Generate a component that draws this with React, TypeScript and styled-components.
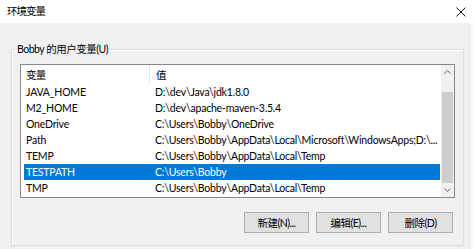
import React from 'react'
import styled, { createGlobalStyle } from 'styled-components'

const GlobalStyle = createGlobalStyle`
  html, body {
    margin: 0;
    padding: 0;
    width: 474px;
    height: 249px;
    overflow: hidden;
    background: #ffffff;
  }
  body {
    font-family: Lato, "Noto Sans CJK SC", sans-serif;
    font-size: 10.5px;
    color: #000000;
  }
`

type Variable = {
  name: string
  value: string
  selected?: boolean
}

const variables: Variable[] = [
  { name: 'JAVA_HOME', value: 'D:\\dev\\Java\\jdk1.8.0' },
  { name: 'M2_HOME', value: 'D:\\dev\\apache-maven-3.5.4' },
  { name: 'OneDrive', value: 'C:\\Users\\Bobby\\OneDrive' },
  {
    name: 'Path',
    value: 'C:\\Users\\Bobby\\AppData\\Local\\Microsoft\\WindowsApps;D:\\...',
  },
  { name: 'TEMP', value: 'C:\\Users\\Bobby\\AppData\\Local\\Temp' },
  { name: 'TESTPATH', value: 'C:\\Users\\Bobby', selected: true },
  { name: 'TMP', value: 'C:\\Users\\Bobby\\AppData\\Local\\Temp' },
]

export default function App() {
  return (
    <>
      <GlobalStyle />
      <Window>
        <TitleBar>
          <Title>环境变量</Title>
          <CloseButton aria-label="关闭">
            <svg width="10" height="10" viewBox="0 0 10 10">
              <path d="M0.5 0.5 L9.5 9.5 M9.5 0.5 L0.5 9.5" stroke="#1a1a1a" strokeWidth="1" />
            </svg>
          </CloseButton>
        </TitleBar>
        <Body>
          <GroupBox>
            <Legend>Bobby 的用户变量(U)</Legend>
            <ListView>
              <Rows>
                <HeaderRow>
                  <HeaderCell>变量</HeaderCell>
                  <HeaderCell $divider>值</HeaderCell>
                </HeaderRow>
                {variables.map((v) => (
                  <Row key={v.name} $selected={v.selected}>
                    <NameCell>{v.name}</NameCell>
                    <ValueCell>{v.value}</ValueCell>
                  </Row>
                ))}
              </Rows>
              <ScrollBar>
                <ScrollArrow>
                  <svg width="7" height="4" viewBox="0 0 7 4">
                    <path d="M0.5 3.5 L3.5 0.5 L6.5 3.5" stroke="#606060" fill="none" />
                  </svg>
                </ScrollArrow>
                <Track>
                  <Thumb />
                </Track>
                <ScrollArrow>
                  <svg width="7" height="4" viewBox="0 0 7 4">
                    <path d="M0.5 0.5 L3.5 3.5 L6.5 0.5" stroke="#606060" fill="none" />
                  </svg>
                </ScrollArrow>
              </ScrollBar>
            </ListView>
            <ButtonRow>
              <Button>新建(N)...</Button>
              <Button>编辑(E)...</Button>
              <Button>删除(D)</Button>
            </ButtonRow>
          </GroupBox>
        </Body>
      </Window>
    </>
  )
}

const Window = styled.div`
  width: 474px;
  height: 249px;
  display: flex;
  flex-direction: column;
`

const TitleBar = styled.div`
  height: 23px;
  flex: none;
  display: flex;
  align-items: center;
  justify-content: space-between;
  padding: 0 6px 0 7px;
  background: #ffffff;
`

const Title = styled.span`
  line-height: 16px;
  margin-top: -1px;
  letter-spacing: -1px;
`

const CloseButton = styled.div`
  display: flex;
  align-items: center;
  justify-content: center;
  width: 14px;
  height: 14px;
  margin-top: 1px;
`

const Body = styled.div`
  flex: 1;
  background: #f0f0f0;
  border-right: 3px solid #fafafa;
  padding: 18px 7px 0 11px;
`

const GroupBox = styled.fieldset`
  margin: 0;
  padding: 0 8px 12px 8px;
  border: 1px solid #dcdcdc;
  box-shadow: inset 1px 1px 0 #ffffff;
  min-width: 0;
`

const Legend = styled.legend`
  margin-left: -5px;
  padding: 0 2px;
  line-height: 16px;
  letter-spacing: -0.5px;
`

const ListView = styled.div`
  margin-top: 7px;
  height: 134px;
  box-sizing: border-box;
  border: 1px solid #828790;
  background: #ffffff;
  display: flex;
`

const Rows = styled.div`
  flex: 1;
  min-width: 0;
  padding: 0 1px 0 3px;
`

const HeaderRow = styled.div`
  height: 19px;
  display: grid;
  grid-template-columns: 125px 1fr;
  align-items: stretch;
  letter-spacing: -0.8px;
`

const HeaderCell = styled.div<{ $divider?: boolean }>`
  display: flex;
  align-items: center;
  padding-left: ${({ $divider }) => ($divider ? 6 : 2)}px;
  border-left: ${({ $divider }) => ($divider ? '1px solid #e5e5e5' : 'none')};
  line-height: 16px;
`

const Row = styled.div<{ $selected?: boolean }>`
  height: 16px;
  display: grid;
  grid-template-columns: 125px 1fr;
  align-items: center;
  line-height: 16px;
  white-space: nowrap;
  letter-spacing: -0.2px;
  background: ${({ $selected }) => ($selected ? '#0078d7' : 'transparent')};
  color: ${({ $selected }) => ($selected ? '#ffffff' : '#000000')};
`

const NameCell = styled.div`
  padding-left: 2px;
  overflow: hidden;
`

const ValueCell = styled.div`
  padding-left: 6px;
  overflow: hidden;
`

const ScrollBar = styled.div`
  width: 13px;
  flex: none;
  display: flex;
  flex-direction: column;
  background: #f0f0f0;
`

const ScrollArrow = styled.div`
  height: 14px;
  flex: none;
  display: flex;
  align-items: center;
  justify-content: center;
`

const Track = styled.div`
  flex: 1;
  display: flex;
  flex-direction: column;
  justify-content: flex-end;
  padding: 13px 0 0 0;
`

const Thumb = styled.div`
  flex: 1;
  margin: 0 1px;
  background: #cdcdcd;
`

const ButtonRow = styled.div`
  display: flex;
  justify-content: flex-end;
  gap: 7px;
  margin-top: 14px;
  padding-right: 2px;
`

const Button = styled.div`
  width: 65px;
  height: 21px;
  box-sizing: border-box;
  display: flex;
  align-items: center;
  justify-content: center;
  background: #e1e1e1;
  border: 1px solid #adadad;
  line-height: 16px;
  letter-spacing: -0.5px;
`
